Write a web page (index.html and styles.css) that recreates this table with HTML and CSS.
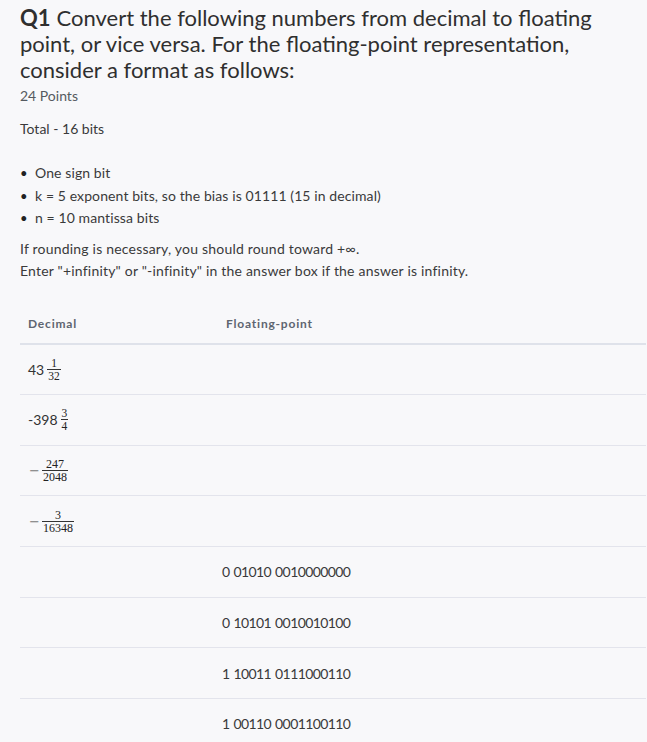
FILE: index.html
```html
<!DOCTYPE html>
<html lang="en">
<head>
<meta charset="utf-8">
<title>Q1</title>
<link rel="stylesheet" href="styles.css">
</head>
<body>
<div class="page">
  <h2 class="q-title"><strong class="q-num">Q1</strong><span class="q-text">Convert the following numbers from decimal to floating point, or vice versa. For the floating-point representation, consider a format as follows:</span></h2>
  <div class="q-points">24 Points</div>
  <p class="q-total">Total - 16 bits</p>
  <ul class="q-list">
    <li>One sign bit</li>
    <li>k = 5 exponent bits, so the bias is 01111 (15 in decimal)</li>
    <li>n = 10 mantissa bits</li>
  </ul>
  <p class="q-note">If rounding is necessary, you should round toward +∞.<br>Enter "+infinity" or "-infinity" in the answer box if the answer is infinity.</p>

  <div class="q-table">
    <div class="row head">
      <div class="cell th">Decimal</div>
      <div class="cell th">Floating-point</div>
    </div>
    <div class="row">
      <div class="cell dec">43<span class="frac"><span class="num">1</span><span class="den">32</span></span></div>
      <div class="cell fp"></div>
    </div>
    <div class="row">
      <div class="cell dec">-398<span class="frac"><span class="num">3</span><span class="den">4</span></span></div>
      <div class="cell fp"></div>
    </div>
    <div class="row">
      <div class="cell dec"><span class="minus">−</span><span class="frac wide"><span class="num">247</span><span class="den">2048</span></span></div>
      <div class="cell fp"></div>
    </div>
    <div class="row">
      <div class="cell dec"><span class="minus">−</span><span class="frac wide"><span class="num">3</span><span class="den">16348</span></span></div>
      <div class="cell fp"></div>
    </div>
    <div class="row">
      <div class="cell dec"></div>
      <div class="cell fp">0 01010 0010000000</div>
    </div>
    <div class="row">
      <div class="cell dec"></div>
      <div class="cell fp">0 10101 0010010100</div>
    </div>
    <div class="row">
      <div class="cell dec"></div>
      <div class="cell fp">1 10011 0111000110</div>
    </div>
    <div class="row">
      <div class="cell dec"></div>
      <div class="cell fp">1 00110 0001100110</div>
    </div>
  </div>
</div>
</body>
</html>
```

FILE: styles.css
```css
html, body {
  margin: 0;
  padding: 0;
  background: #f8f8fa;
}
body {
  font-family: Lato, "Open Sans", Arial, sans-serif;
  color: #3a3a3a;
  font-size: 14px;
}
.page {
  padding: 0 1px 0 20px;
  overflow: hidden;
}
.q-title {
  margin: 5px 0 0 0;
  max-width: 594px;
  font-size: 22px;
  line-height: 26px;
  font-weight: 400;
  color: #2f2f2f;
}
.q-num {
  font-weight: 700;
  margin-right: 6px;
}
.q-points {
  margin-top: 3px;
  line-height: 20px;
  font-size: 14px;
  color: #555a60;
}
.q-total {
  margin: 12px 0 0 0;
  line-height: 22px;
}
.q-list {
  list-style: none;
  margin: 22px 0 0 0;
  padding: 0;
  letter-spacing: 0.1px;
}
.q-list li {
  display: flex;
  line-height: 22.5px;
}
.q-list li::before {
  content: "\2022";
  width: 15px;
  flex: none;
  font-size: 13px;
  color: #222;
}
.q-note {
  margin: 8px 0 0 0;
  line-height: 22px;
  letter-spacing: 0.2px;
}
.q-table {
  margin-top: 19px;
}
.row {
  display: grid;
  grid-template-columns: 198px 1fr;
  height: 50.67px;
  box-sizing: border-box;
  border-bottom: 1px solid #e3e4ec;
  align-items: center;
}
.row.head {
  height: 44px;
  border-bottom: 2px solid #dfe2ea;
  align-items: start;
}
.th {
  padding: 15px 0 0 8px;
  line-height: 16px;
  font-size: 12px;
  font-weight: 700;
  letter-spacing: 0.8px;
  color: #5e6570;
}
.cell.dec {
  padding-left: 8px;
  display: flex;
  align-items: center;
  color: #333;
}
.cell.fp {
  padding-left: 4px;
  color: #3a3a3a;
  letter-spacing: -0.6px;
  word-spacing: 1px;
}
.frac {
  display: inline-flex;
  flex-direction: column;
  align-items: stretch;
  text-align: center;
  margin-left: 3px;
  font-family: "Liberation Serif", "Times New Roman", serif;
  font-size: 11.5px;
  line-height: 10px;
  color: #222;
}
.frac .num {
  border-bottom: 1px solid #333;
  padding: 0 1px 1px;
}
.frac .den {
  padding: 1px 1px 0;
}
.frac.wide {
  margin-left: 2px;
  font-size: 12px;
}
.minus {
  font-family: "DejaVu Serif", serif;
  font-size: 13px;
  color: #777;
  margin-left: 1px;
}
```
